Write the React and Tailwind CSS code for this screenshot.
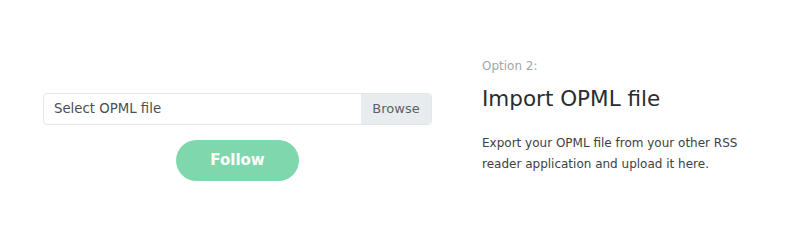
export default function App() {
  const font = { fontFamily: '"DejaVu Sans", "Open Sans", sans-serif' };
  return (
    <div className="w-[800px] h-[247px] bg-white flex" style={font}>
      <div className="w-[439px] pl-[43px] pr-[7px] pt-[93px] flex flex-col items-center">
        <div className="w-full h-[32px] flex rounded-[4px] border border-[#e3e6ea] overflow-hidden">
          <div className="flex-1 flex items-center pl-[10px] text-[13.3px] text-[#4b4f54]">Select OPML file</div>
          <div className="w-[70px] bg-[#e9ecef] flex items-center justify-center text-[13px] text-[#5c6166]">Browse</div>
        </div>
        <button className="mt-[15px] w-[123px] h-[41px] rounded-full bg-[#7fd8ad] text-white font-bold text-[15px]">Follow</button>
      </div>
      <div className="pl-[43px] pt-[56px] flex flex-col">
        <div className="text-[12px] leading-[20px] text-[#a3a6a9]">Option 2:</div>
        <div className="mt-[9px] text-[21.5px] leading-[28px] text-[#2a2d30]">Import OPML file</div>
        <div className="mt-[20px] w-[275px] text-[12px] leading-[21px] text-[#3d4145]">Export your OPML file from your other RSS reader application and upload it here.</div>
      </div>
    </div>
  );
}
